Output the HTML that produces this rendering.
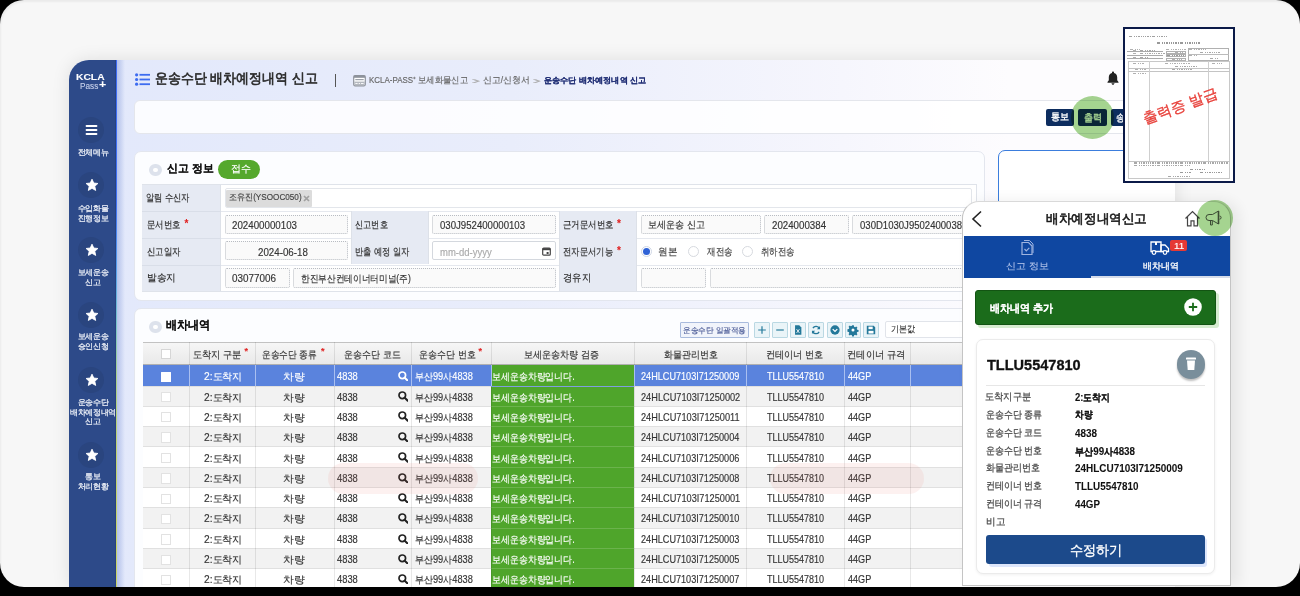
<!DOCTYPE html><html><head><meta charset="utf-8"><style>
*{box-sizing:border-box;margin:0;padding:0}
html,body{width:1300px;height:596px;overflow:hidden;background:#000;font-family:"Liberation Sans",sans-serif;}
.abs{position:absolute}
.t{position:absolute;white-space:nowrap;line-height:1}
#frame{position:absolute;left:0;top:0;width:1300px;height:587px;background:#f7f7f7;border-radius:24px;overflow:hidden;box-shadow:inset 1px 2px 2px rgba(0,0,0,.05)}
#win{position:absolute;left:69px;top:60px;width:1106px;height:527px;border-top-left-radius:20px;overflow:hidden;
 background:linear-gradient(90deg,#e2e8fb 0%,#e9edfb 40%,#f6f6fd 70%,#fdfcfe 85%);box-shadow:0 0 18px rgba(0,0,0,.10)}
#side{position:absolute;left:0;top:0;width:48px;height:527px;background:#2d4a89}
#sline{position:absolute;left:46.5px;top:0;width:1.5px;height:527px;background:linear-gradient(180deg,#3d6cf4 0%,#3f72f4 27%,#58a2ee 40%,#78c6cc 50%,#a9d28a 60%,#c2d46c 75%,#cad464 100%)}
#sdark{position:absolute;left:45.5px;top:0;width:1px;height:527px;background:#27427f}
#sideshadow{position:absolute;left:48px;top:0;width:8px;height:527px;background:linear-gradient(90deg,#b4c2ea,rgba(226,232,251,0))}
.sc{position:absolute;width:26px;height:26px;border-radius:50%;background:#2a457f}
.sl{position:absolute;left:0;width:48px;text-align:center;color:#f2f5fb;font-size:8px;line-height:9.6px;white-space:nowrap;letter-spacing:-0.3px;-webkit-text-stroke:0.2px #f2f5fb}
</style></head><body>
<div id="frame">
<div id="win">
<div id="sideshadow"></div>
<div id="side">
<div class="sc" style="left:9px;top:57px"></div>
<svg class="abs" style="left:16px;top:64px" width="13" height="12" viewBox="0 0 13 12"><path d="M1.5 2h10M1.5 6h10M1.5 10h10" stroke="#fff" stroke-width="1.8" stroke-linecap="round"/></svg>
<div class="sl" style="top:88px">전체메뉴</div>
<div class="sc" style="left:9px;top:112px"></div>
<svg class="abs" style="left:16px;top:118px" width="14" height="14" viewBox="0 0 24 24"><path fill="#fff" stroke="#fff" stroke-width="1.5" stroke-linejoin="round" d="M12 2l3 6.6 7.1.8-5.3 4.8 1.5 7.1L12 17.7l-6.3 3.6 1.5-7.1-5.3-4.8 7.1-.8z"/></svg>
<div class="sl" style="top:144px">수입화물<br>진행정보</div>
<div class="sc" style="left:9px;top:177px"></div>
<svg class="abs" style="left:16px;top:183px" width="14" height="14" viewBox="0 0 24 24"><path fill="#fff" stroke="#fff" stroke-width="1.5" stroke-linejoin="round" d="M12 2l3 6.6 7.1.8-5.3 4.8 1.5 7.1L12 17.7l-6.3 3.6 1.5-7.1-5.3-4.8 7.1-.8z"/></svg>
<div class="sl" style="top:208px">보세운송<br>신고</div>
<div class="sc" style="left:9px;top:242px"></div>
<svg class="abs" style="left:16px;top:248px" width="14" height="14" viewBox="0 0 24 24"><path fill="#fff" stroke="#fff" stroke-width="1.5" stroke-linejoin="round" d="M12 2l3 6.6 7.1.8-5.3 4.8 1.5 7.1L12 17.7l-6.3 3.6 1.5-7.1-5.3-4.8 7.1-.8z"/></svg>
<div class="sl" style="top:272px">보세운송<br>승인신청</div>
<div class="sc" style="left:9px;top:307px"></div>
<svg class="abs" style="left:16px;top:313px" width="14" height="14" viewBox="0 0 24 24"><path fill="#fff" stroke="#fff" stroke-width="1.5" stroke-linejoin="round" d="M12 2l3 6.6 7.1.8-5.3 4.8 1.5 7.1L12 17.7l-6.3 3.6 1.5-7.1-5.3-4.8 7.1-.8z"/></svg>
<div class="sl" style="top:338px">운송수단<br>배차예정내역<br>신고</div>
<div class="sc" style="left:9px;top:382px"></div>
<svg class="abs" style="left:16px;top:388px" width="14" height="14" viewBox="0 0 24 24"><path fill="#fff" stroke="#fff" stroke-width="1.5" stroke-linejoin="round" d="M12 2l3 6.6 7.1.8-5.3 4.8 1.5 7.1L12 17.7l-6.3 3.6 1.5-7.1-5.3-4.8 7.1-.8z"/></svg>
<div class="sl" style="top:412px">통보<br>처리현황</div>
<div class="t" style="left:7.10px;top:13.35px;font-size:8.58px;font-weight:bold;color:#fff;transform:scaleX(1.2000);transform-origin:0 0;-webkit-text-stroke:0.08px currentColor">KCLA</div>
<div class="t" style="left:11.39px;top:21.80px;font-size:9.00px;color:#c3cde8;transform:scaleX(0.9111);transform-origin:0 0;-webkit-text-stroke:0.15px currentColor">Pass</div>
<div class="t" style="left:30.30px;top:19.73px;font-size:10.29px;font-weight:bold;color:#fff;transform:scaleX(1.2000);transform-origin:0 0;-webkit-text-stroke:0.08px currentColor">+</div>
<div id="sdark"></div><div id="sline"></div>
</div>
<svg class="abs" style="left:66.00px;top:13.00px" width="15" height="13" viewBox="0 0 15 13"><g fill="#3d6cf0"><circle cx="1.6" cy="1.8" r="1.6"/><circle cx="1.6" cy="6.5" r="1.6"/><circle cx="1.6" cy="11.2" r="1.6"/><rect x="4.5" y="0.9" width="10.5" height="1.8"/><rect x="4.5" y="5.6" width="10.5" height="1.8"/><rect x="4.5" y="10.3" width="10.5" height="1.8"/></g></svg>
<div class="t" style="left:86.37px;top:11.77px;font-size:13.73px;color:#2a2a2a;-webkit-text-stroke:0.65px #2a2a2a;transform:scaleX(0.9254);transform-origin:0 0">운송수단 배차예정내역 신고</div>
<div class="abs" style="left:266.00px;top:14.00px;width:1.00px;height:13.00px;background:#555"></div>
<svg class="abs" style="left:284.00px;top:15.00px" width="13" height="11.5" viewBox="0 0 13 11.5"><rect x="0.7" y="0.7" width="11.6" height="10.1" rx="1.2" fill="#fff" stroke="#8d929b" stroke-width="1.2"/><rect x="1" y="1" width="11" height="1.8" fill="#8d929b"/><rect x="2.3" y="4" width="8.4" height="1.2" fill="#9ca1a9"/><rect x="1.3" y="6.6" width="10.4" height="3.6" fill="#b4b8bf"/><path d="M2.4 8.5h2.2M5.7 8.5h1.4M8 8.5h2.6" stroke="#fff" stroke-width="0.9"/></svg>
<div class="t" style="left:300.37px;top:16.12px;font-size:8.58px;color:#666;transform:scaleX(0.9269);transform-origin:0 0;-webkit-text-stroke:0.15px currentColor">KCLA-PASS⁺ 보세화물신고</div>
<div class="t" style="left:402.20px;top:15.74px;font-size:9.50px;color:#aaa;transform:scaleX(3.1000);transform-origin:0 0;-webkit-text-stroke:0.15px currentColor">›</div>
<div class="t" style="left:413.53px;top:15.62px;font-size:8.58px;color:#666;transform:scaleX(0.9860);transform-origin:0 0;-webkit-text-stroke:0.15px currentColor">신고/신청서</div>
<div class="t" style="left:462.90px;top:15.74px;font-size:9.50px;color:#aaa;transform:scaleX(3.0000);transform-origin:0 0;-webkit-text-stroke:0.15px currentColor">›</div>
<div class="t" style="left:474.58px;top:16.14px;font-size:8.36px;font-weight:bold;color:#1f2d74;transform:scaleX(1.0173);transform-origin:0 0;-webkit-text-stroke:0.08px currentColor">운송수단 배차예정내역 신고</div>
<svg class="abs" style="left:1038.00px;top:11.00px" width="12" height="14" viewBox="0 0 12 14"><path fill="#222" d="M6 0.5c.6 0 1 .4 1 1v.5c2 .5 3.2 2.2 3.2 4.3v3l1.3 1.7v.7H.5v-.7l1.3-1.7v-3C1.8 4.2 3 2.5 5 2v-.5c0-.6.4-1 1-1zM4.5 12.2h3c0 .9-.7 1.5-1.5 1.5s-1.5-.6-1.5-1.5z"/></svg>
<div class="abs" style="left:65.00px;top:39.50px;width:1066.00px;height:34.00px;background:rgba(255,255,255,.85);border:1px solid #e4e6ec;border-radius:6px"></div>
<div class="abs" style="left:977.00px;top:48.50px;width:28.00px;height:17.00px;background:#0d2d5f;border-radius:2px"></div>
<div class="t" style="left:982.39px;top:52.28px;font-size:9.72px;color:#fff;-webkit-text-stroke:0.35px #fff;transform:scaleX(0.9059);transform-origin:0 0">통보</div>
<div class="abs" style="left:1009.00px;top:48.50px;width:29.00px;height:17.00px;background:#0d2d5f;border-radius:2px"></div>
<div class="t" style="left:1014.89px;top:52.54px;font-size:9.66px;color:#fff;-webkit-text-stroke:0.35px #fff;transform:scaleX(0.9059);transform-origin:0 0">출력</div>
<div class="abs" style="left:1041.50px;top:48.50px;width:29.50px;height:17.00px;background:#0d2d5f;border-radius:2px"></div>
<div class="t" style="left:1046.89px;top:52.54px;font-size:9.66px;color:#fff;-webkit-text-stroke:0.35px #fff;transform:scaleX(0.9059);transform-origin:0 0">송신</div>
<div class="abs" style="left:1002.00px;top:35.50px;width:43.00px;height:43.00px;background:#a5d490;border-radius:50%;mix-blend-mode:multiply"></div>
<div class="abs" style="left:64.50px;top:90.50px;width:851.50px;height:150.50px;background:#fcfdff;border:1px solid #e3e6ee;border-radius:7px"></div>
<div class="abs" style="left:80.0px;top:103.5px;width:12.5px;height:12.5px;border-radius:50%;border:4px solid #dde2ec;background:#fff"></div>
<div class="t" style="left:97.51px;top:102.79px;font-size:11.41px;font-weight:bold;color:#111;transform:scaleX(0.9909);transform-origin:0 0;-webkit-text-stroke:0.08px currentColor">신고 정보</div>
<div class="abs" style="left:149.00px;top:99.50px;width:42.20px;height:19.00px;background:#55a82c;border-radius:10px"></div>
<div class="t" style="left:161.50px;top:104.00px;font-size:10px;color:#fff;-webkit-text-stroke:0.15px currentColor">접수</div>
<div class="abs" style="left:73.00px;top:124.00px;width:834.50px;height:107.50px;background:#fff;border:1px solid #dfe3ea;border-left:none"></div>
<div class="abs" style="left:73.00px;top:150.80px;width:833.00px;height:1.00px;background:#e5e8ee"></div>
<div class="abs" style="left:73.00px;top:177.50px;width:833.00px;height:1.00px;background:#e5e8ee"></div>
<div class="abs" style="left:73.00px;top:204.50px;width:833.00px;height:1.00px;background:#e5e8ee"></div>
<div class="abs" style="left:73.00px;top:124.50px;width:79.00px;height:106.50px;background:#e6eaf3;border-right:1px solid #dde1e8"></div>
<div class="abs" style="left:282.00px;top:150.80px;width:78.00px;height:53.70px;background:#e6eaf3;border-left:1px solid #dde1e8;border-right:1px solid #dde1e8"></div>
<div class="abs" style="left:490.00px;top:150.80px;width:78.00px;height:80.20px;background:#e6eaf3;border-left:1px solid #dde1e8;border-right:1px solid #dde1e8"></div>
<div class="abs" style="left:73.00px;top:150.80px;width:79.00px;height:1.00px;background:#d9dee8"></div>
<div class="abs" style="left:73.00px;top:177.50px;width:79.00px;height:1.00px;background:#d9dee8"></div>
<div class="abs" style="left:73.00px;top:204.50px;width:79.00px;height:1.00px;background:#d9dee8"></div>
<div class="t" style="left:77.27px;top:132.90px;font-size:9.60px;color:#2a2a2a;transform:scaleX(0.8300);transform-origin:0 0;-webkit-text-stroke:0.15px currentColor">알림 수신자</div>
<div class="t" style="left:77.66px;top:159.90px;font-size:9.60px;color:#2a2a2a;transform:scaleX(0.8432);transform-origin:0 0;-webkit-text-stroke:0.15px currentColor">문서번호</div>
<div class="t" style="left:115.50px;top:158.50px;font-size:10px;color:#e02020;font-weight:bold;-webkit-text-stroke:0.08px currentColor">*</div>
<div class="t" style="left:77.66px;top:186.90px;font-size:9.60px;color:#2a2a2a;transform:scaleX(0.8432);transform-origin:0 0;-webkit-text-stroke:0.15px currentColor">신고일자</div>
<div class="t" style="left:77.53px;top:213.30px;font-size:9.60px;color:#2a2a2a;transform:scaleX(0.9667);transform-origin:0 0;-webkit-text-stroke:0.15px currentColor">발송지</div>
<div class="t" style="left:286.48px;top:159.90px;font-size:9.60px;color:#2a2a2a;transform:scaleX(0.8216);transform-origin:0 0;-webkit-text-stroke:0.15px currentColor">신고번호</div>
<div class="t" style="left:286.47px;top:186.90px;font-size:9.60px;color:#2a2a2a;transform:scaleX(0.8290);transform-origin:0 0;-webkit-text-stroke:0.15px currentColor">반출 예정 일자</div>
<div class="t" style="left:493.96px;top:159.90px;font-size:9.60px;color:#2a2a2a;transform:scaleX(0.8404);transform-origin:0 0;-webkit-text-stroke:0.15px currentColor">근거문서번호</div>
<div class="t" style="left:548.00px;top:158.50px;font-size:10px;color:#e02020;font-weight:bold;-webkit-text-stroke:0.08px currentColor">*</div>
<div class="t" style="left:493.97px;top:186.90px;font-size:9.60px;color:#2a2a2a;transform:scaleX(0.8333);transform-origin:0 0;-webkit-text-stroke:0.15px currentColor">전자문서기능</div>
<div class="t" style="left:548.00px;top:185.50px;font-size:10px;color:#e02020;font-weight:bold;-webkit-text-stroke:0.08px currentColor">*</div>
<div class="t" style="left:493.87px;top:213.30px;font-size:9.60px;color:#2a2a2a;transform:scaleX(0.9333);transform-origin:0 0;-webkit-text-stroke:0.15px currentColor">경유지</div>
<div class="abs" style="left:155.50px;top:128.00px;width:747.50px;height:20.00px;background:#fff;border:1px solid #e3e6eb;border-radius:2px"></div>
<div class="abs" style="left:157.00px;top:130.30px;width:85.50px;height:16.70px;background:#dcdcdc;border-radius:1px"></div>
<div class="t" style="left:159.61px;top:133.08px;font-size:9.14px;color:#444;transform:scaleX(0.8937);transform-origin:0 0;-webkit-text-stroke:0.15px currentColor">조유진(YSOOC050)</div>
<svg class="abs" style="left:233.50px;top:135.00px" width="7" height="7" viewBox="0 0 7 7"><path d="M1 1l5 5M6 1L1 6" stroke="#a0a0a0" stroke-width="1.7"/></svg>
<div class="abs" style="left:155.50px;top:154.60px;width:123.00px;height:19.00px;background:#fafafa;border:1px dotted #b8bcc2;border-radius:2px"></div>
<div class="t" style="left:162.83px;top:160.80px;font-size:10.00px;color:#333;transform:scaleX(0.9734);transform-origin:0 0;-webkit-text-stroke:0.15px currentColor">202400000103</div>
<div class="abs" style="left:363.00px;top:154.60px;width:124.00px;height:19.00px;background:#fafafa;border:1px dotted #b8bcc2;border-radius:2px"></div>
<div class="t" style="left:371.34px;top:160.80px;font-size:10.00px;color:#333;transform:scaleX(0.9616);transform-origin:0 0;-webkit-text-stroke:0.15px currentColor">030J952400000103</div>
<div class="abs" style="left:571.50px;top:154.60px;width:120.00px;height:19.00px;background:#fafafa;border:1px dotted #b8bcc2;border-radius:2px"></div>
<div class="t" style="left:578.69px;top:159.80px;font-size:10.00px;color:#333;transform:scaleX(0.9052);transform-origin:0 0;-webkit-text-stroke:0.15px currentColor">보세운송 신고</div>
<div class="abs" style="left:695.00px;top:154.60px;width:84.50px;height:19.00px;background:#fafafa;border:1px dotted #b8bcc2;border-radius:2px"></div>
<div class="t" style="left:703.03px;top:160.80px;font-size:10.00px;color:#333;transform:scaleX(0.9717);transform-origin:0 0;-webkit-text-stroke:0.15px currentColor">2024000384</div>
<div class="abs" style="left:783.00px;top:154.60px;width:148.00px;height:19.00px;background:#fafafa;border:1px dotted #b8bcc2;border-radius:2px"></div>
<div class="t" style="left:790.64px;top:160.80px;font-size:10.00px;color:#333;transform:scaleX(0.9555);transform-origin:0 0;-webkit-text-stroke:0.15px currentColor">030D1030J95024000384</div>
<div class="abs" style="left:155.50px;top:181.20px;width:123.00px;height:19.00px;background:#fafafa;border:1px dotted #b8bcc2;border-radius:2px"></div>
<div class="t" style="left:189.33px;top:187.60px;font-size:10.00px;color:#333;transform:scaleX(0.9735);transform-origin:0 0;-webkit-text-stroke:0.15px currentColor">2024-06-18</div>
<div class="abs" style="left:363.00px;top:181.20px;width:124.00px;height:19.00px;background:#fff;border:1px solid #d4d8de;border-radius:2px"></div>
<div class="t" style="left:371.35px;top:187.60px;font-size:10.00px;color:#aaa;transform:scaleX(0.9500);transform-origin:0 0;-webkit-text-stroke:0.15px currentColor">mm-dd-yyyy</div>
<svg class="abs" style="left:473.00px;top:187.00px" width="9" height="9" viewBox="0 0 9 9"><rect x="0.7" y="1.2" width="7.6" height="7" rx="1" fill="none" stroke="#444" stroke-width="1.2"/><rect x="0.7" y="1.2" width="7.6" height="2" fill="#444"/><rect x="4.6" y="5" width="2" height="2" fill="#444"/></svg>
<div class="abs" style="left:571.5px;top:186.0px;width:11px;height:11px;border-radius:50%;background:#fff;border:1px solid #cfd6e4"><div style="position:absolute;left:1px;top:1px;width:7px;height:7px;border-radius:50%;background:#2f62d6"></div></div>
<div class="t" style="left:589.38px;top:186.90px;font-size:9.60px;color:#444;transform:scaleX(0.9625);transform-origin:0 0;-webkit-text-stroke:0.15px currentColor">원본</div>
<div class="abs" style="left:618.5px;top:186.0px;width:11px;height:11px;border-radius:50%;background:#fff;border:1px solid #d6d9de"></div>
<div class="t" style="left:637.85px;top:186.90px;font-size:9.60px;color:#444;transform:scaleX(0.8519);transform-origin:0 0;-webkit-text-stroke:0.15px currentColor">재전송</div>
<div class="abs" style="left:673.0px;top:186.0px;width:11px;height:11px;border-radius:50%;background:#fff;border:1px solid #d6d9de"></div>
<div class="t" style="left:692.11px;top:186.90px;font-size:9.60px;color:#444;transform:scaleX(0.8472);transform-origin:0 0;-webkit-text-stroke:0.15px currentColor">취하전송</div>
<div class="abs" style="left:155.50px;top:208.20px;width:65.50px;height:19.40px;background:#fafafa;border:1px dotted #b8bcc2;border-radius:2px"></div>
<div class="t" style="left:162.81px;top:214.40px;font-size:10.00px;color:#333;transform:scaleX(0.9881);transform-origin:0 0;-webkit-text-stroke:0.15px currentColor">03077006</div>
<div class="abs" style="left:224.00px;top:208.20px;width:263.00px;height:19.40px;background:#fafafa;border:1px dotted #b8bcc2;border-radius:2px"></div>
<div class="t" style="left:231.83px;top:213.50px;font-size:10.00px;color:#333;transform:scaleX(0.8669);transform-origin:0 0;-webkit-text-stroke:0.15px currentColor">한진부산컨테이너터미널(주)</div>
<div class="abs" style="left:571.50px;top:208.20px;width:65.00px;height:19.40px;background:#fafafa;border:1px dotted #b8bcc2;border-radius:2px"></div>
<div class="abs" style="left:640.50px;top:208.20px;width:290.50px;height:19.40px;background:#fafafa;border:1px dotted #b8bcc2;border-radius:2px"></div>
<div class="abs" style="left:929.00px;top:90.00px;width:202.00px;height:110.00px;background:#fff;border:1px solid #3b7ddd;border-radius:7px"></div>
<div class="abs" style="left:64.50px;top:247.50px;width:851.50px;height:312.50px;background:#fcfdff;border:1px solid #e3e6ee;border-radius:7px"></div>
<div class="abs" style="left:80.0px;top:260.5px;width:12.5px;height:12.5px;border-radius:50%;border:4px solid #dde2ec;background:#fff"></div>
<div class="t" style="left:97.37px;top:260.18px;font-size:11.52px;font-weight:bold;color:#111;transform:scaleX(0.9273);transform-origin:0 0;-webkit-text-stroke:0.08px currentColor">배차내역</div>
<div class="abs" style="left:610.50px;top:262.00px;width:69.50px;height:16.00px;background:#f1f4fb;border:1px solid #a9bbdd;border-radius:1px"></div>
<div class="t" style="left:614.35px;top:265.86px;font-size:8.34px;color:#4a5a96;transform:scaleX(0.9508);transform-origin:0 0;-webkit-text-stroke:0.15px currentColor">운송수단 일괄적용</div>
<div class="abs" style="left:685.00px;top:261.50px;width:16.00px;height:16.00px;background:#eaf4f8;border:1px solid #bad8e3;border-radius:1px"></div>
<div class="abs" style="left:703.00px;top:261.50px;width:16.00px;height:16.00px;background:#eaf4f8;border:1px solid #bad8e3;border-radius:1px"></div>
<div class="abs" style="left:721.00px;top:261.50px;width:16.00px;height:16.00px;background:#eaf4f8;border:1px solid #bad8e3;border-radius:1px"></div>
<div class="abs" style="left:739.00px;top:261.50px;width:16.00px;height:16.00px;background:#eaf4f8;border:1px solid #bad8e3;border-radius:1px"></div>
<div class="abs" style="left:757.50px;top:261.50px;width:16.00px;height:16.00px;background:#eaf4f8;border:1px solid #bad8e3;border-radius:1px"></div>
<div class="abs" style="left:776.00px;top:261.50px;width:16.00px;height:16.00px;background:#eaf4f8;border:1px solid #bad8e3;border-radius:1px"></div>
<div class="abs" style="left:794.00px;top:261.50px;width:16.00px;height:16.00px;background:#eaf4f8;border:1px solid #bad8e3;border-radius:1px"></div>
<svg class="abs" style="left:685.00px;top:261.50px" width="16" height="16" viewBox="-1.5 -1.5 19 19"><path d="M8 3.5v9M3.5 8h9" stroke="#23789a" stroke-width="1.4"/></svg>
<svg class="abs" style="left:703.00px;top:261.50px" width="16" height="16" viewBox="-1.5 -1.5 19 19"><path d="M3.5 8h9" stroke="#23789a" stroke-width="1.4"/></svg>
<svg class="abs" style="left:721.00px;top:261.50px" width="16" height="16" viewBox="-1.5 -1.5 19 19"><path d="M4.5 2.5h5l2.5 2.5v8.5h-7.5z" fill="#23789a"/><path d="M6.3 7l3.4 4.5M9.7 7l-3.4 4.5" stroke="#fff" stroke-width="1"/></svg>
<svg class="abs" style="left:739.00px;top:261.50px" width="16" height="16" viewBox="-1.5 -1.5 19 19"><path d="M12 6.5A4.2 4.2 0 0 0 4.3 5.8M4 9.5a4.2 4.2 0 0 0 7.7.7" fill="none" stroke="#23789a" stroke-width="1.5"/><path d="M12.8 3.2v3.8H9z M3.2 12.8V9H7z" fill="#23789a"/></svg>
<svg class="abs" style="left:757.50px;top:261.50px" width="16" height="16" viewBox="-1.5 -1.5 19 19"><circle cx="8" cy="8" r="5.5" fill="#23789a"/><path d="M5.3 7l2.7 2.7L10.7 7" fill="none" stroke="#fff" stroke-width="1.5"/></svg>
<svg class="abs" style="left:776.00px;top:261.50px" width="16" height="16" viewBox="-1.5 -1.5 19 19"><path fill="#23789a" d="M7 2.5h2l.3 1.6 1.2.6 1.4-.9 1.4 1.4-.9 1.4.6 1.2 1.6.3v2l-1.6.3-.6 1.2.9 1.4-1.4 1.4-1.4-.9-1.2.6-.3 1.6H7l-.3-1.6-1.2-.6-1.4.9-1.4-1.4.9-1.4-.6-1.2-1.6-.3V7l1.6-.3.6-1.2-.9-1.4 1.4-1.4 1.4.9 1.2-.6z"/><circle cx="8" cy="8" r="1.8" fill="#fff"/></svg>
<svg class="abs" style="left:794.00px;top:261.50px" width="16" height="16" viewBox="-1.5 -1.5 19 19"><path fill="#23789a" d="M3 3h8.2L13 4.8V13H3z"/><rect x="5" y="4" width="5" height="3" fill="#fff"/><rect x="5" y="9" width="6" height="3.2" fill="#fff"/></svg>
<div class="abs" style="left:815.50px;top:261.00px;width:115.50px;height:17.00px;background:#fff;border:1px solid #e1e4ea;border-radius:2px"></div>
<div class="t" style="left:822.40px;top:265.08px;font-size:9.12px;color:#333;transform:scaleX(0.8960);transform-origin:0 0;-webkit-text-stroke:0.15px currentColor">기본값</div>
<div class="abs" style="left:73.50px;top:282.00px;width:857.50px;height:23.00px;background:linear-gradient(#f6f6f6,#e9e9e9);border-top:1px solid #c2c2c2;border-bottom:1px solid #b0b0b0"></div>
<div class="abs" style="left:73.50px;top:305.00px;width:857.50px;height:20.80px;background:#5a83dd;border-top:1px solid #5a83dd"></div>
<div class="abs" style="left:421.50px;top:305.00px;width:143.50px;height:20.80px;background:#4fa52b;border-top:1px solid #4fa52b"></div>
<div class="abs" style="left:91.50px;top:311.60px;width:10.50px;height:10.20px;background:#fff;border:1px solid #fff;border-radius:0.5px"></div>
<div class="t" style="left:134.91px;top:312.20px;font-size:10.30px;color:#fff;transform:scaleX(0.9939);transform-origin:0 0;-webkit-text-stroke:0.15px currentColor">2:도착지</div>
<div class="t" style="left:213.94px;top:312.20px;font-size:10.30px;color:#fff;transform:scaleX(1.0812);transform-origin:0 0;-webkit-text-stroke:0.15px currentColor">차량</div>
<div class="t" style="left:268.00px;top:312.20px;font-size:10.30px;color:#fff;transform:scaleX(0.9091);transform-origin:0 0;-webkit-text-stroke:0.15px currentColor">4838</div>
<svg class="abs" style="left:328.80px;top:310.80px" width="10.5" height="10.5" viewBox="0 0 10.5 10.5"><circle cx="4.3" cy="4.3" r="3.3" fill="none" stroke="#fff" stroke-width="1.7"/><path d="M6.7 6.7l3 3" stroke="#fff" stroke-width="2" stroke-linecap="round"/></svg>
<div class="t" style="left:345.50px;top:312.20px;font-size:10.30px;color:#fff;transform:scaleX(0.8984);transform-origin:0 0;-webkit-text-stroke:0.15px currentColor">부산99사4838</div>
<div class="t" style="left:423.42px;top:312.20px;font-size:10.30px;color:#fff;transform:scaleX(0.8910);transform-origin:0 0;-webkit-text-stroke:0.15px currentColor">보세운송차량입니다.</div>
<div class="t" style="left:571.91px;top:312.20px;font-size:10.30px;color:#fff;transform:scaleX(0.8853);transform-origin:0 0;-webkit-text-stroke:0.15px currentColor">24HLCU7103I71250009</div>
<div class="t" style="left:698.00px;top:312.20px;font-size:10.30px;color:#fff;transform:scaleX(0.8734);transform-origin:0 0;-webkit-text-stroke:0.15px currentColor">TLLU5547810</div>
<div class="t" style="left:778.60px;top:312.20px;font-size:10.30px;color:#fff;transform:scaleX(0.8840);transform-origin:0 0;-webkit-text-stroke:0.15px currentColor">44GP</div>
<div class="abs" style="left:73.50px;top:325.80px;width:857.50px;height:20.10px;background:#f2f2f2;border-top:1px solid #e0e0e0"></div>
<div class="abs" style="left:421.50px;top:325.80px;width:143.50px;height:20.10px;background:#4fa52b;border-top:1px solid #7f9fe0"></div>
<div class="abs" style="left:91.50px;top:332.05px;width:10.50px;height:10.20px;background:#fff;border:1px solid #e2e2e2;border-radius:0.5px"></div>
<div class="t" style="left:134.91px;top:332.65px;font-size:10.30px;color:#333;transform:scaleX(0.9939);transform-origin:0 0;-webkit-text-stroke:0.15px currentColor">2:도착지</div>
<div class="t" style="left:213.94px;top:332.65px;font-size:10.30px;color:#333;transform:scaleX(1.0812);transform-origin:0 0;-webkit-text-stroke:0.15px currentColor">차량</div>
<div class="t" style="left:268.00px;top:332.65px;font-size:10.30px;color:#333;transform:scaleX(0.9091);transform-origin:0 0;-webkit-text-stroke:0.15px currentColor">4838</div>
<svg class="abs" style="left:328.80px;top:331.25px" width="10.5" height="10.5" viewBox="0 0 10.5 10.5"><circle cx="4.3" cy="4.3" r="3.3" fill="none" stroke="#222" stroke-width="1.7"/><path d="M6.7 6.7l3 3" stroke="#222" stroke-width="2" stroke-linecap="round"/></svg>
<div class="t" style="left:345.50px;top:332.65px;font-size:10.30px;color:#333;transform:scaleX(0.8984);transform-origin:0 0;-webkit-text-stroke:0.15px currentColor">부산99사4838</div>
<div class="t" style="left:423.42px;top:332.65px;font-size:10.30px;color:#fff;transform:scaleX(0.8910);transform-origin:0 0;-webkit-text-stroke:0.15px currentColor">보세운송차량입니다.</div>
<div class="t" style="left:571.91px;top:332.65px;font-size:10.30px;color:#333;transform:scaleX(0.8935);transform-origin:0 0;-webkit-text-stroke:0.15px currentColor">24HLCU7103I71250002</div>
<div class="t" style="left:698.00px;top:332.65px;font-size:10.30px;color:#333;transform:scaleX(0.8734);transform-origin:0 0;-webkit-text-stroke:0.15px currentColor">TLLU5547810</div>
<div class="t" style="left:778.60px;top:332.65px;font-size:10.30px;color:#333;transform:scaleX(0.8840);transform-origin:0 0;-webkit-text-stroke:0.15px currentColor">44GP</div>
<div class="abs" style="left:73.50px;top:345.90px;width:857.50px;height:20.20px;background:#ffffff;border-top:1px solid #e0e0e0"></div>
<div class="abs" style="left:421.50px;top:345.90px;width:143.50px;height:20.20px;background:#4fa52b;border-top:1px solid #6bb34c"></div>
<div class="abs" style="left:91.50px;top:352.20px;width:10.50px;height:10.20px;background:#fff;border:1px solid #e2e2e2;border-radius:0.5px"></div>
<div class="t" style="left:134.91px;top:352.80px;font-size:10.30px;color:#333;transform:scaleX(0.9939);transform-origin:0 0;-webkit-text-stroke:0.15px currentColor">2:도착지</div>
<div class="t" style="left:213.94px;top:352.80px;font-size:10.30px;color:#333;transform:scaleX(1.0812);transform-origin:0 0;-webkit-text-stroke:0.15px currentColor">차량</div>
<div class="t" style="left:268.00px;top:352.80px;font-size:10.30px;color:#333;transform:scaleX(0.9091);transform-origin:0 0;-webkit-text-stroke:0.15px currentColor">4838</div>
<svg class="abs" style="left:328.80px;top:351.40px" width="10.5" height="10.5" viewBox="0 0 10.5 10.5"><circle cx="4.3" cy="4.3" r="3.3" fill="none" stroke="#222" stroke-width="1.7"/><path d="M6.7 6.7l3 3" stroke="#222" stroke-width="2" stroke-linecap="round"/></svg>
<div class="t" style="left:345.50px;top:352.80px;font-size:10.30px;color:#333;transform:scaleX(0.8984);transform-origin:0 0;-webkit-text-stroke:0.15px currentColor">부산99사4838</div>
<div class="t" style="left:423.42px;top:352.80px;font-size:10.30px;color:#fff;transform:scaleX(0.8910);transform-origin:0 0;-webkit-text-stroke:0.15px currentColor">보세운송차량입니다.</div>
<div class="t" style="left:571.91px;top:352.80px;font-size:10.30px;color:#333;transform:scaleX(0.8935);transform-origin:0 0;-webkit-text-stroke:0.15px currentColor">24HLCU7103I71250011</div>
<div class="t" style="left:698.00px;top:352.80px;font-size:10.30px;color:#333;transform:scaleX(0.8734);transform-origin:0 0;-webkit-text-stroke:0.15px currentColor">TLLU5547810</div>
<div class="t" style="left:778.60px;top:352.80px;font-size:10.30px;color:#333;transform:scaleX(0.8840);transform-origin:0 0;-webkit-text-stroke:0.15px currentColor">44GP</div>
<div class="abs" style="left:73.50px;top:366.10px;width:857.50px;height:20.30px;background:#f2f2f2;border-top:1px solid #e0e0e0"></div>
<div class="abs" style="left:421.50px;top:366.10px;width:143.50px;height:20.30px;background:#4fa52b;border-top:1px solid #6bb34c"></div>
<div class="abs" style="left:91.50px;top:372.45px;width:10.50px;height:10.20px;background:#fff;border:1px solid #e2e2e2;border-radius:0.5px"></div>
<div class="t" style="left:134.91px;top:373.05px;font-size:10.30px;color:#333;transform:scaleX(0.9939);transform-origin:0 0;-webkit-text-stroke:0.15px currentColor">2:도착지</div>
<div class="t" style="left:213.94px;top:373.05px;font-size:10.30px;color:#333;transform:scaleX(1.0812);transform-origin:0 0;-webkit-text-stroke:0.15px currentColor">차량</div>
<div class="t" style="left:268.00px;top:373.05px;font-size:10.30px;color:#333;transform:scaleX(0.9091);transform-origin:0 0;-webkit-text-stroke:0.15px currentColor">4838</div>
<svg class="abs" style="left:328.80px;top:371.65px" width="10.5" height="10.5" viewBox="0 0 10.5 10.5"><circle cx="4.3" cy="4.3" r="3.3" fill="none" stroke="#222" stroke-width="1.7"/><path d="M6.7 6.7l3 3" stroke="#222" stroke-width="2" stroke-linecap="round"/></svg>
<div class="t" style="left:345.50px;top:373.05px;font-size:10.30px;color:#333;transform:scaleX(0.8984);transform-origin:0 0;-webkit-text-stroke:0.15px currentColor">부산99사4838</div>
<div class="t" style="left:423.42px;top:373.05px;font-size:10.30px;color:#fff;transform:scaleX(0.8910);transform-origin:0 0;-webkit-text-stroke:0.15px currentColor">보세운송차량입니다.</div>
<div class="t" style="left:571.91px;top:373.05px;font-size:10.30px;color:#333;transform:scaleX(0.8853);transform-origin:0 0;-webkit-text-stroke:0.15px currentColor">24HLCU7103I71250004</div>
<div class="t" style="left:698.00px;top:373.05px;font-size:10.30px;color:#333;transform:scaleX(0.8734);transform-origin:0 0;-webkit-text-stroke:0.15px currentColor">TLLU5547810</div>
<div class="t" style="left:778.60px;top:373.05px;font-size:10.30px;color:#333;transform:scaleX(0.8840);transform-origin:0 0;-webkit-text-stroke:0.15px currentColor">44GP</div>
<div class="abs" style="left:73.50px;top:386.40px;width:857.50px;height:20.60px;background:#ffffff;border-top:1px solid #e0e0e0"></div>
<div class="abs" style="left:421.50px;top:386.40px;width:143.50px;height:20.60px;background:#4fa52b;border-top:1px solid #6bb34c"></div>
<div class="abs" style="left:91.50px;top:392.90px;width:10.50px;height:10.20px;background:#fff;border:1px solid #e2e2e2;border-radius:0.5px"></div>
<div class="t" style="left:134.91px;top:393.50px;font-size:10.30px;color:#333;transform:scaleX(0.9939);transform-origin:0 0;-webkit-text-stroke:0.15px currentColor">2:도착지</div>
<div class="t" style="left:213.94px;top:393.50px;font-size:10.30px;color:#333;transform:scaleX(1.0812);transform-origin:0 0;-webkit-text-stroke:0.15px currentColor">차량</div>
<div class="t" style="left:268.00px;top:393.50px;font-size:10.30px;color:#333;transform:scaleX(0.9091);transform-origin:0 0;-webkit-text-stroke:0.15px currentColor">4838</div>
<svg class="abs" style="left:328.80px;top:392.10px" width="10.5" height="10.5" viewBox="0 0 10.5 10.5"><circle cx="4.3" cy="4.3" r="3.3" fill="none" stroke="#222" stroke-width="1.7"/><path d="M6.7 6.7l3 3" stroke="#222" stroke-width="2" stroke-linecap="round"/></svg>
<div class="t" style="left:345.50px;top:393.50px;font-size:10.30px;color:#333;transform:scaleX(0.8984);transform-origin:0 0;-webkit-text-stroke:0.15px currentColor">부산99사4838</div>
<div class="t" style="left:423.42px;top:393.50px;font-size:10.30px;color:#fff;transform:scaleX(0.8910);transform-origin:0 0;-webkit-text-stroke:0.15px currentColor">보세운송차량입니다.</div>
<div class="t" style="left:571.91px;top:393.50px;font-size:10.30px;color:#333;transform:scaleX(0.8853);transform-origin:0 0;-webkit-text-stroke:0.15px currentColor">24HLCU7103I71250006</div>
<div class="t" style="left:698.00px;top:393.50px;font-size:10.30px;color:#333;transform:scaleX(0.8734);transform-origin:0 0;-webkit-text-stroke:0.15px currentColor">TLLU5547810</div>
<div class="t" style="left:778.60px;top:393.50px;font-size:10.30px;color:#333;transform:scaleX(0.8840);transform-origin:0 0;-webkit-text-stroke:0.15px currentColor">44GP</div>
<div class="abs" style="left:73.50px;top:407.00px;width:857.50px;height:20.30px;background:#f2f2f2;border-top:1px solid #e0e0e0"></div>
<div class="abs" style="left:421.50px;top:407.00px;width:143.50px;height:20.30px;background:#4fa52b;border-top:1px solid #6bb34c"></div>
<div class="abs" style="left:91.50px;top:413.35px;width:10.50px;height:10.20px;background:#fff;border:1px solid #e2e2e2;border-radius:0.5px"></div>
<div class="t" style="left:134.91px;top:413.95px;font-size:10.30px;color:#333;transform:scaleX(0.9939);transform-origin:0 0;-webkit-text-stroke:0.15px currentColor">2:도착지</div>
<div class="t" style="left:213.94px;top:413.95px;font-size:10.30px;color:#333;transform:scaleX(1.0812);transform-origin:0 0;-webkit-text-stroke:0.15px currentColor">차량</div>
<div class="t" style="left:268.00px;top:413.95px;font-size:10.30px;color:#333;transform:scaleX(0.9091);transform-origin:0 0;-webkit-text-stroke:0.15px currentColor">4838</div>
<svg class="abs" style="left:328.80px;top:412.55px" width="10.5" height="10.5" viewBox="0 0 10.5 10.5"><circle cx="4.3" cy="4.3" r="3.3" fill="none" stroke="#222" stroke-width="1.7"/><path d="M6.7 6.7l3 3" stroke="#222" stroke-width="2" stroke-linecap="round"/></svg>
<div class="t" style="left:345.50px;top:413.95px;font-size:10.30px;color:#333;transform:scaleX(0.8984);transform-origin:0 0;-webkit-text-stroke:0.15px currentColor">부산99사4838</div>
<div class="t" style="left:423.42px;top:413.95px;font-size:10.30px;color:#fff;transform:scaleX(0.8910);transform-origin:0 0;-webkit-text-stroke:0.15px currentColor">보세운송차량입니다.</div>
<div class="t" style="left:571.91px;top:413.95px;font-size:10.30px;color:#333;transform:scaleX(0.8853);transform-origin:0 0;-webkit-text-stroke:0.15px currentColor">24HLCU7103I71250008</div>
<div class="t" style="left:698.00px;top:413.95px;font-size:10.30px;color:#333;transform:scaleX(0.8734);transform-origin:0 0;-webkit-text-stroke:0.15px currentColor">TLLU5547810</div>
<div class="t" style="left:778.60px;top:413.95px;font-size:10.30px;color:#333;transform:scaleX(0.8840);transform-origin:0 0;-webkit-text-stroke:0.15px currentColor">44GP</div>
<div class="abs" style="left:73.50px;top:427.30px;width:857.50px;height:20.00px;background:#ffffff;border-top:1px solid #e0e0e0"></div>
<div class="abs" style="left:421.50px;top:427.30px;width:143.50px;height:20.00px;background:#4fa52b;border-top:1px solid #6bb34c"></div>
<div class="abs" style="left:91.50px;top:433.50px;width:10.50px;height:10.20px;background:#fff;border:1px solid #e2e2e2;border-radius:0.5px"></div>
<div class="t" style="left:134.91px;top:434.10px;font-size:10.30px;color:#333;transform:scaleX(0.9939);transform-origin:0 0;-webkit-text-stroke:0.15px currentColor">2:도착지</div>
<div class="t" style="left:213.94px;top:434.10px;font-size:10.30px;color:#333;transform:scaleX(1.0812);transform-origin:0 0;-webkit-text-stroke:0.15px currentColor">차량</div>
<div class="t" style="left:268.00px;top:434.10px;font-size:10.30px;color:#333;transform:scaleX(0.9091);transform-origin:0 0;-webkit-text-stroke:0.15px currentColor">4838</div>
<svg class="abs" style="left:328.80px;top:432.70px" width="10.5" height="10.5" viewBox="0 0 10.5 10.5"><circle cx="4.3" cy="4.3" r="3.3" fill="none" stroke="#222" stroke-width="1.7"/><path d="M6.7 6.7l3 3" stroke="#222" stroke-width="2" stroke-linecap="round"/></svg>
<div class="t" style="left:345.50px;top:434.10px;font-size:10.30px;color:#333;transform:scaleX(0.8984);transform-origin:0 0;-webkit-text-stroke:0.15px currentColor">부산99사4838</div>
<div class="t" style="left:423.42px;top:434.10px;font-size:10.30px;color:#fff;transform:scaleX(0.8910);transform-origin:0 0;-webkit-text-stroke:0.15px currentColor">보세운송차량입니다.</div>
<div class="t" style="left:571.91px;top:434.10px;font-size:10.30px;color:#333;transform:scaleX(0.8935);transform-origin:0 0;-webkit-text-stroke:0.15px currentColor">24HLCU7103I71250001</div>
<div class="t" style="left:698.00px;top:434.10px;font-size:10.30px;color:#333;transform:scaleX(0.8734);transform-origin:0 0;-webkit-text-stroke:0.15px currentColor">TLLU5547810</div>
<div class="t" style="left:778.60px;top:434.10px;font-size:10.30px;color:#333;transform:scaleX(0.8840);transform-origin:0 0;-webkit-text-stroke:0.15px currentColor">44GP</div>
<div class="abs" style="left:73.50px;top:447.30px;width:857.50px;height:20.70px;background:#f2f2f2;border-top:1px solid #e0e0e0"></div>
<div class="abs" style="left:421.50px;top:447.30px;width:143.50px;height:20.70px;background:#4fa52b;border-top:1px solid #6bb34c"></div>
<div class="abs" style="left:91.50px;top:453.85px;width:10.50px;height:10.20px;background:#fff;border:1px solid #e2e2e2;border-radius:0.5px"></div>
<div class="t" style="left:134.91px;top:454.45px;font-size:10.30px;color:#333;transform:scaleX(0.9939);transform-origin:0 0;-webkit-text-stroke:0.15px currentColor">2:도착지</div>
<div class="t" style="left:213.94px;top:454.45px;font-size:10.30px;color:#333;transform:scaleX(1.0812);transform-origin:0 0;-webkit-text-stroke:0.15px currentColor">차량</div>
<div class="t" style="left:268.00px;top:454.45px;font-size:10.30px;color:#333;transform:scaleX(0.9091);transform-origin:0 0;-webkit-text-stroke:0.15px currentColor">4838</div>
<svg class="abs" style="left:328.80px;top:453.05px" width="10.5" height="10.5" viewBox="0 0 10.5 10.5"><circle cx="4.3" cy="4.3" r="3.3" fill="none" stroke="#222" stroke-width="1.7"/><path d="M6.7 6.7l3 3" stroke="#222" stroke-width="2" stroke-linecap="round"/></svg>
<div class="t" style="left:345.50px;top:454.45px;font-size:10.30px;color:#333;transform:scaleX(0.8984);transform-origin:0 0;-webkit-text-stroke:0.15px currentColor">부산99사4838</div>
<div class="t" style="left:423.42px;top:454.45px;font-size:10.30px;color:#fff;transform:scaleX(0.8910);transform-origin:0 0;-webkit-text-stroke:0.15px currentColor">보세운송차량입니다.</div>
<div class="t" style="left:571.91px;top:454.45px;font-size:10.30px;color:#333;transform:scaleX(0.8853);transform-origin:0 0;-webkit-text-stroke:0.15px currentColor">24HLCU7103I71250010</div>
<div class="t" style="left:698.00px;top:454.45px;font-size:10.30px;color:#333;transform:scaleX(0.8734);transform-origin:0 0;-webkit-text-stroke:0.15px currentColor">TLLU5547810</div>
<div class="t" style="left:778.60px;top:454.45px;font-size:10.30px;color:#333;transform:scaleX(0.8840);transform-origin:0 0;-webkit-text-stroke:0.15px currentColor">44GP</div>
<div class="abs" style="left:73.50px;top:468.00px;width:857.50px;height:20.30px;background:#ffffff;border-top:1px solid #e0e0e0"></div>
<div class="abs" style="left:421.50px;top:468.00px;width:143.50px;height:20.30px;background:#4fa52b;border-top:1px solid #6bb34c"></div>
<div class="abs" style="left:91.50px;top:474.35px;width:10.50px;height:10.20px;background:#fff;border:1px solid #e2e2e2;border-radius:0.5px"></div>
<div class="t" style="left:134.91px;top:474.95px;font-size:10.30px;color:#333;transform:scaleX(0.9939);transform-origin:0 0;-webkit-text-stroke:0.15px currentColor">2:도착지</div>
<div class="t" style="left:213.94px;top:474.95px;font-size:10.30px;color:#333;transform:scaleX(1.0812);transform-origin:0 0;-webkit-text-stroke:0.15px currentColor">차량</div>
<div class="t" style="left:268.00px;top:474.95px;font-size:10.30px;color:#333;transform:scaleX(0.9091);transform-origin:0 0;-webkit-text-stroke:0.15px currentColor">4838</div>
<svg class="abs" style="left:328.80px;top:473.55px" width="10.5" height="10.5" viewBox="0 0 10.5 10.5"><circle cx="4.3" cy="4.3" r="3.3" fill="none" stroke="#222" stroke-width="1.7"/><path d="M6.7 6.7l3 3" stroke="#222" stroke-width="2" stroke-linecap="round"/></svg>
<div class="t" style="left:345.50px;top:474.95px;font-size:10.30px;color:#333;transform:scaleX(0.8984);transform-origin:0 0;-webkit-text-stroke:0.15px currentColor">부산99사4838</div>
<div class="t" style="left:423.42px;top:474.95px;font-size:10.30px;color:#fff;transform:scaleX(0.8910);transform-origin:0 0;-webkit-text-stroke:0.15px currentColor">보세운송차량입니다.</div>
<div class="t" style="left:571.91px;top:474.95px;font-size:10.30px;color:#333;transform:scaleX(0.8853);transform-origin:0 0;-webkit-text-stroke:0.15px currentColor">24HLCU7103I71250003</div>
<div class="t" style="left:698.00px;top:474.95px;font-size:10.30px;color:#333;transform:scaleX(0.8734);transform-origin:0 0;-webkit-text-stroke:0.15px currentColor">TLLU5547810</div>
<div class="t" style="left:778.60px;top:474.95px;font-size:10.30px;color:#333;transform:scaleX(0.8840);transform-origin:0 0;-webkit-text-stroke:0.15px currentColor">44GP</div>
<div class="abs" style="left:73.50px;top:488.30px;width:857.50px;height:20.10px;background:#f2f2f2;border-top:1px solid #e0e0e0"></div>
<div class="abs" style="left:421.50px;top:488.30px;width:143.50px;height:20.10px;background:#4fa52b;border-top:1px solid #6bb34c"></div>
<div class="abs" style="left:91.50px;top:494.55px;width:10.50px;height:10.20px;background:#fff;border:1px solid #e2e2e2;border-radius:0.5px"></div>
<div class="t" style="left:134.91px;top:495.15px;font-size:10.30px;color:#333;transform:scaleX(0.9939);transform-origin:0 0;-webkit-text-stroke:0.15px currentColor">2:도착지</div>
<div class="t" style="left:213.94px;top:495.15px;font-size:10.30px;color:#333;transform:scaleX(1.0812);transform-origin:0 0;-webkit-text-stroke:0.15px currentColor">차량</div>
<div class="t" style="left:268.00px;top:495.15px;font-size:10.30px;color:#333;transform:scaleX(0.9091);transform-origin:0 0;-webkit-text-stroke:0.15px currentColor">4838</div>
<svg class="abs" style="left:328.80px;top:493.75px" width="10.5" height="10.5" viewBox="0 0 10.5 10.5"><circle cx="4.3" cy="4.3" r="3.3" fill="none" stroke="#222" stroke-width="1.7"/><path d="M6.7 6.7l3 3" stroke="#222" stroke-width="2" stroke-linecap="round"/></svg>
<div class="t" style="left:345.50px;top:495.15px;font-size:10.30px;color:#333;transform:scaleX(0.8984);transform-origin:0 0;-webkit-text-stroke:0.15px currentColor">부산99사4838</div>
<div class="t" style="left:423.42px;top:495.15px;font-size:10.30px;color:#fff;transform:scaleX(0.8910);transform-origin:0 0;-webkit-text-stroke:0.15px currentColor">보세운송차량입니다.</div>
<div class="t" style="left:571.91px;top:495.15px;font-size:10.30px;color:#333;transform:scaleX(0.8853);transform-origin:0 0;-webkit-text-stroke:0.15px currentColor">24HLCU7103I71250005</div>
<div class="t" style="left:698.00px;top:495.15px;font-size:10.30px;color:#333;transform:scaleX(0.8734);transform-origin:0 0;-webkit-text-stroke:0.15px currentColor">TLLU5547810</div>
<div class="t" style="left:778.60px;top:495.15px;font-size:10.30px;color:#333;transform:scaleX(0.8840);transform-origin:0 0;-webkit-text-stroke:0.15px currentColor">44GP</div>
<div class="abs" style="left:73.50px;top:508.40px;width:857.50px;height:20.20px;background:#ffffff;border-top:1px solid #e0e0e0"></div>
<div class="abs" style="left:421.50px;top:508.40px;width:143.50px;height:20.20px;background:#4fa52b;border-top:1px solid #6bb34c"></div>
<div class="abs" style="left:91.50px;top:514.70px;width:10.50px;height:10.20px;background:#fff;border:1px solid #e2e2e2;border-radius:0.5px"></div>
<div class="t" style="left:134.91px;top:515.30px;font-size:10.30px;color:#333;transform:scaleX(0.9939);transform-origin:0 0;-webkit-text-stroke:0.15px currentColor">2:도착지</div>
<div class="t" style="left:213.94px;top:515.30px;font-size:10.30px;color:#333;transform:scaleX(1.0812);transform-origin:0 0;-webkit-text-stroke:0.15px currentColor">차량</div>
<div class="t" style="left:268.00px;top:515.30px;font-size:10.30px;color:#333;transform:scaleX(0.9091);transform-origin:0 0;-webkit-text-stroke:0.15px currentColor">4838</div>
<svg class="abs" style="left:328.80px;top:513.90px" width="10.5" height="10.5" viewBox="0 0 10.5 10.5"><circle cx="4.3" cy="4.3" r="3.3" fill="none" stroke="#222" stroke-width="1.7"/><path d="M6.7 6.7l3 3" stroke="#222" stroke-width="2" stroke-linecap="round"/></svg>
<div class="t" style="left:345.50px;top:515.30px;font-size:10.30px;color:#333;transform:scaleX(0.8984);transform-origin:0 0;-webkit-text-stroke:0.15px currentColor">부산99사4838</div>
<div class="t" style="left:423.42px;top:515.30px;font-size:10.30px;color:#fff;transform:scaleX(0.8910);transform-origin:0 0;-webkit-text-stroke:0.15px currentColor">보세운송차량입니다.</div>
<div class="t" style="left:571.91px;top:515.30px;font-size:10.30px;color:#333;transform:scaleX(0.8853);transform-origin:0 0;-webkit-text-stroke:0.15px currentColor">24HLCU7103I71250007</div>
<div class="t" style="left:698.00px;top:515.30px;font-size:10.30px;color:#333;transform:scaleX(0.8734);transform-origin:0 0;-webkit-text-stroke:0.15px currentColor">TLLU5547810</div>
<div class="t" style="left:778.60px;top:515.30px;font-size:10.30px;color:#333;transform:scaleX(0.8840);transform-origin:0 0;-webkit-text-stroke:0.15px currentColor">44GP</div>
<div class="abs" style="left:120.00px;top:282.00px;width:1.00px;height:245.00px;background:rgba(0,0,0,.09)"></div>
<div class="abs" style="left:120.00px;top:305.00px;width:1.00px;height:20.80px;background:#a9bff0"></div>
<div class="abs" style="left:185.50px;top:282.00px;width:1.00px;height:245.00px;background:rgba(0,0,0,.09)"></div>
<div class="abs" style="left:185.50px;top:305.00px;width:1.00px;height:20.80px;background:#a9bff0"></div>
<div class="abs" style="left:264.50px;top:282.00px;width:1.00px;height:245.00px;background:rgba(0,0,0,.09)"></div>
<div class="abs" style="left:264.50px;top:305.00px;width:1.00px;height:20.80px;background:#a9bff0"></div>
<div class="abs" style="left:342.00px;top:282.00px;width:1.00px;height:245.00px;background:rgba(0,0,0,.09)"></div>
<div class="abs" style="left:342.00px;top:305.00px;width:1.00px;height:20.80px;background:#a9bff0"></div>
<div class="abs" style="left:421.50px;top:282.00px;width:1.00px;height:245.00px;background:rgba(0,0,0,.09)"></div>
<div class="abs" style="left:421.50px;top:305.00px;width:1.00px;height:20.80px;background:#a9bff0"></div>
<div class="abs" style="left:565.00px;top:282.00px;width:1.00px;height:245.00px;background:rgba(0,0,0,.09)"></div>
<div class="abs" style="left:565.00px;top:305.00px;width:1.00px;height:20.80px;background:#a9bff0"></div>
<div class="abs" style="left:676.50px;top:282.00px;width:1.00px;height:245.00px;background:rgba(0,0,0,.09)"></div>
<div class="abs" style="left:676.50px;top:305.00px;width:1.00px;height:20.80px;background:#a9bff0"></div>
<div class="abs" style="left:775.00px;top:282.00px;width:1.00px;height:245.00px;background:rgba(0,0,0,.09)"></div>
<div class="abs" style="left:775.00px;top:305.00px;width:1.00px;height:20.80px;background:#a9bff0"></div>
<div class="abs" style="left:840.50px;top:282.00px;width:1.00px;height:245.00px;background:rgba(0,0,0,.09)"></div>
<div class="abs" style="left:840.50px;top:305.00px;width:1.00px;height:20.80px;background:#a9bff0"></div>
<div class="abs" style="left:92.00px;top:289.00px;width:10.00px;height:10.00px;background:#fff;border:1px solid #d6d6d6"></div>
<div class="t" style="left:123.96px;top:289.80px;font-size:10.30px;color:#333;transform:scaleX(0.9204);transform-origin:0 0;-webkit-text-stroke:0.15px currentColor">도착지 구분</div>
<div class="t" style="left:175.50px;top:286.50px;font-size:9px;color:#e02020;font-weight:bold;-webkit-text-stroke:0.08px currentColor">*</div>
<div class="t" style="left:192.73px;top:289.80px;font-size:10.30px;color:#333;transform:scaleX(0.8717);transform-origin:0 0;-webkit-text-stroke:0.15px currentColor">운송수단 종류</div>
<div class="t" style="left:252.00px;top:286.50px;font-size:9px;color:#e02020;font-weight:bold;-webkit-text-stroke:0.08px currentColor">*</div>
<div class="t" style="left:275.40px;top:289.80px;font-size:10.30px;color:#333;transform:scaleX(0.9000);transform-origin:0 0;-webkit-text-stroke:0.15px currentColor">운송수단 코드</div>
<div class="t" style="left:349.80px;top:289.80px;font-size:10.30px;color:#333;transform:scaleX(0.9000);transform-origin:0 0;-webkit-text-stroke:0.15px currentColor">운송수단 번호</div>
<div class="t" style="left:409.50px;top:286.50px;font-size:9px;color:#e02020;font-weight:bold;-webkit-text-stroke:0.08px currentColor">*</div>
<div class="t" style="left:455.49px;top:289.80px;font-size:10.30px;color:#333;transform:scaleX(0.9063);transform-origin:0 0;-webkit-text-stroke:0.15px currentColor">보세운송차량 검증</div>
<div class="t" style="left:594.60px;top:289.80px;font-size:10.30px;color:#333;transform:scaleX(0.8982);transform-origin:0 0;-webkit-text-stroke:0.15px currentColor">화물관리번호</div>
<div class="t" style="left:696.87px;top:289.80px;font-size:10.30px;color:#333;transform:scaleX(0.9136);transform-origin:0 0;-webkit-text-stroke:0.15px currentColor">컨테이너 번호</div>
<div class="t" style="left:778.43px;top:289.80px;font-size:10.30px;color:#333;transform:scaleX(0.9345);transform-origin:0 0;-webkit-text-stroke:0.15px currentColor">컨테이너 규격</div>
<div class="abs" style="left:259.00px;top:403.00px;width:150.00px;height:31.00px;background:rgba(240,120,110,.10);border-radius:16px"></div>
<div class="abs" style="left:701.00px;top:403.00px;width:154.00px;height:31.00px;background:rgba(240,120,110,.10);border-radius:16px"></div>
</div>
<div class="abs" style="left:962.00px;top:200.50px;width:269.00px;height:385.50px;background:#fff;border:1px solid #c4c4c4;border-top-color:#d9d9d9;border-radius:17px 17px 0 0;box-shadow:8px 0 14px rgba(0,0,0,.07)"></div>
<svg class="abs" style="left:971.00px;top:210.00px" width="12" height="18" viewBox="0 0 12 18"><path d="M10 1.5L2 9l8 7.5" fill="none" stroke="#222" stroke-width="1.6"/></svg>
<div class="t" style="left:1045.90px;top:211.72px;font-size:13.18px;color:#1a1a1a;-webkit-text-stroke:0.6px #1a1a1a;transform:scaleX(0.9725);transform-origin:0 0">배차예정내역신고</div>
<svg class="abs" style="left:1184.00px;top:210.00px" width="17" height="17" viewBox="0 0 17 17"><path d="M1.5 8.5L8.5 1.5l7 7M3.5 6.8v9h3.5v-5h3v5h3.5v-9" fill="none" stroke="#444" stroke-width="1.2"/></svg>
<svg class="abs" style="left:1204.00px;top:209.00px" width="20" height="18" viewBox="0 0 20 18"><path d="M5 5.5h3.5l6-3.5v13l-6-3.5H5a3 3 0 0 1 0-6z" fill="none" stroke="#5a5a5a" stroke-width="1"/><path d="M14.5 2v13" stroke="#5a5a5a" stroke-width="1.6"/><path d="M6.5 11.5v4.5h1.8v-4.5" fill="none" stroke="#5a5a5a" stroke-width="1"/><path d="M15.5 7a1.6 1.6 0 0 1 0 3.2" fill="none" stroke="#5a5a5a" stroke-width="1"/></svg>
<div class="abs" style="left:1197.00px;top:200.00px;width:36.00px;height:36.00px;background:#a5d490;border-radius:50%;mix-blend-mode:multiply"></div>
<div class="abs" style="left:963.50px;top:236.00px;width:266.00px;height:41.50px;background:#0f47a1"></div>
<div class="abs" style="left:1090.50px;top:275.50px;width:139.00px;height:2.00px;background:#d5dcea"></div>
<svg class="abs" style="left:1019.00px;top:239.00px" width="16" height="17" viewBox="0 0 16 17"><path d="M3 3.5h6.5L13 7v8.5H3z" fill="none" stroke="#9fb4e0" stroke-width="1.2"/><path d="M5 1.5h5.5l3.5 3.5v9" fill="none" stroke="#9fb4e0" stroke-width="1"/><path d="M5.5 10l1.8 1.8 3-3" fill="none" stroke="#9fb4e0" stroke-width="1.2"/></svg>
<div class="t" style="left:1005.99px;top:262.42px;font-size:8.78px;color:#a9bde6;transform:scaleX(1.1061);transform-origin:0 0;-webkit-text-stroke:0.15px currentColor">신고 정보</div>
<svg class="abs" style="left:1150.00px;top:240.00px" width="20" height="15" viewBox="0 0 20 15"><path d="M1 2h10v9.5H1z" fill="none" stroke="#fff" stroke-width="1.3"/><path d="M11 5h4l3.5 3.5v3H11z" fill="none" stroke="#fff" stroke-width="1.3"/><circle cx="4" cy="12.5" r="1.8" fill="#0f47a1" stroke="#fff" stroke-width="1.2"/><circle cx="15" cy="12.5" r="1.8" fill="#0f47a1" stroke="#fff" stroke-width="1.2"/><path d="M5 2v3h2V2" fill="#fff"/></svg>
<div class="abs" style="left:1170.00px;top:240.00px;width:17.00px;height:11.00px;background:#e53935;border-radius:2px"></div>
<div class="t" style="left:1173.67px;top:241.76px;font-size:8.72px;color:#fff;transform:scaleX(1.1286);transform-origin:0 0;-webkit-text-stroke:0.15px currentColor">11</div>
<div class="t" style="left:1143.20px;top:262.42px;font-size:8.78px;color:#fff;-webkit-text-stroke:0.3px #fff;transform:scaleX(0.9912);transform-origin:0 0">배차내역</div>
<div class="abs" style="left:978.00px;top:292.50px;width:240.50px;height:35.00px;background:#d6ecd0;border-radius:3px"></div>
<div class="abs" style="left:975.00px;top:289.50px;width:241.00px;height:35.50px;background:#1b6c1b;border-radius:3px;border:1px solid #135413"></div>
<div class="t" style="left:990.00px;top:302.58px;font-size:10.52px;color:#fff;font-weight:bold;transform:scaleX(0.9162);transform-origin:0 0;-webkit-text-stroke:0.08px currentColor">배차내역 추가</div>
<svg class="abs" style="left:1184.00px;top:298.00px" width="18" height="18" viewBox="0 0 18 18"><circle cx="9" cy="9" r="8.8" fill="#fff"/><path d="M9 4.8v8.4M4.8 9h8.4" stroke="#1b6c1b" stroke-width="1.8"/></svg>
<div class="abs" style="left:975.50px;top:339.00px;width:239.50px;height:235.00px;background:#fff;border:1px solid #ebebeb;border-radius:7px;box-shadow:0 1px 3px rgba(0,0,0,.06)"></div>
<div class="t" style="left:987.30px;top:357.82px;font-size:14.07px;color:#111;font-weight:bold;transform:scaleX(1.0326);transform-origin:0 0;-webkit-text-stroke:0.30px currentColor">TLLU5547810</div>
<div class="abs" style="left:1176.50px;top:350.00px;width:28.50px;height:28.50px;background:#798e9b;border-radius:50%;box-shadow:0 2px 2px rgba(0,0,0,.25)"></div>
<svg class="abs" style="left:1184.00px;top:356.00px" width="14" height="16" viewBox="0 0 14 16"><rect x="2" y="1.5" width="10" height="2" rx="0.6" fill="#fff"/><path d="M3 4.5h8l-.7 9.5H3.7z" fill="#fff"/></svg>
<div class="abs" style="left:986.00px;top:385.00px;width:219.00px;height:1.00px;background:#e6e6e6"></div>
<div class="t" style="left:985.16px;top:392.30px;font-size:9.60px;color:#4a4a4a;-webkit-text-stroke:0.25px #4a4a4a;transform:scaleX(0.9217);transform-origin:0 0">도착지구분</div>
<div class="t" style="left:986.10px;top:410.05px;font-size:9.60px;color:#4a4a4a;-webkit-text-stroke:0.25px #4a4a4a;transform:scaleX(0.9000);transform-origin:0 0">운송수단 종류</div>
<div class="t" style="left:986.10px;top:427.80px;font-size:9.60px;color:#4a4a4a;-webkit-text-stroke:0.25px #4a4a4a;transform:scaleX(0.9000);transform-origin:0 0">운송수단 코드</div>
<div class="t" style="left:986.10px;top:445.55px;font-size:9.60px;color:#4a4a4a;-webkit-text-stroke:0.25px #4a4a4a;transform:scaleX(0.9000);transform-origin:0 0">운송수단 번호</div>
<div class="t" style="left:986.10px;top:463.30px;font-size:9.60px;color:#4a4a4a;-webkit-text-stroke:0.25px #4a4a4a;transform:scaleX(0.9035);transform-origin:0 0">화물관리번호</div>
<div class="t" style="left:986.10px;top:481.05px;font-size:9.60px;color:#4a4a4a;-webkit-text-stroke:0.25px #4a4a4a;transform:scaleX(0.9000);transform-origin:0 0">컨테이너 번호</div>
<div class="t" style="left:986.10px;top:498.80px;font-size:9.60px;color:#4a4a4a;-webkit-text-stroke:0.25px #4a4a4a;transform:scaleX(0.9000);transform-origin:0 0">컨테이너 규격</div>
<div class="t" style="left:986.04px;top:516.55px;font-size:9.60px;color:#4a4a4a;-webkit-text-stroke:0.25px #4a4a4a;transform:scaleX(0.9588);transform-origin:0 0">비고</div>
<div class="t" style="left:1074.50px;top:392.40px;font-size:9.60px;color:#111;font-weight:bold;-webkit-text-stroke:0.1px #111;transform:scaleX(0.8816);transform-origin:0 0"><span style="font-size:1.12em">2:</span>도착지</div>
<div class="t" style="left:1074.50px;top:410.15px;font-size:9.60px;color:#111;font-weight:bold;-webkit-text-stroke:0.1px #111;transform:scaleX(0.8684);transform-origin:0 0">차량</div>
<div class="t" style="left:1074.50px;top:428.90px;font-size:10.30px;color:#111;font-weight:bold;-webkit-text-stroke:0.05px #111;transform:scaleX(0.9636);transform-origin:0 0">4838</div>
<div class="t" style="left:1074.50px;top:445.65px;font-size:9.60px;color:#111;font-weight:bold;-webkit-text-stroke:0.1px #111;transform:scaleX(0.9108);transform-origin:0 0">부산<span style="font-size:1.12em">99</span>사<span style="font-size:1.12em">4838</span></div>
<div class="t" style="left:1074.50px;top:464.40px;font-size:10.30px;color:#111;font-weight:bold;-webkit-text-stroke:0.05px #111;transform:scaleX(0.9655);transform-origin:0 0">24HLCU7103I71250009</div>
<div class="t" style="left:1074.50px;top:482.15px;font-size:10.30px;color:#111;font-weight:bold;-webkit-text-stroke:0.05px #111;transform:scaleX(0.9569);transform-origin:0 0">TLLU5547810</div>
<div class="t" style="left:1074.50px;top:499.90px;font-size:10.30px;color:#111;font-weight:bold;-webkit-text-stroke:0.05px #111;transform:scaleX(0.9480);transform-origin:0 0">44GP</div>
<div class="abs" style="left:989.00px;top:538.00px;width:218.00px;height:29.00px;background:#dde6fb;border-radius:3px"></div>
<div class="abs" style="left:986.00px;top:535.00px;width:219.00px;height:29.00px;background:#1c4a8b;border-radius:3px"></div>
<div class="t" style="left:1069.86px;top:542.51px;font-size:14.45px;color:#fff;-webkit-text-stroke:0.35px #fff;transform:scaleX(0.9404);transform-origin:0 0">수정하기</div>
<div class="abs" style="left:1123.00px;top:27.00px;width:112.00px;height:156.00px;background:#fff;border:2px solid #0b1a48"></div>
<div class="abs" style="left:1129.00px;top:36.00px;width:38.00px;height:1.20px;background:repeating-linear-gradient(90deg,#a0a0a0 0 1.6px,transparent 1.6px 2.4px,#a0a0a0 2.4px 3.4px,transparent 3.4px 4.6px)"></div>
<div class="abs" style="left:1157.00px;top:42.30px;width:44.00px;height:1.60px;background:repeating-linear-gradient(90deg,#999 0 1.6px,transparent 1.6px 2.4px,#999 2.4px 3.4px,transparent 3.4px 4.6px)"></div>
<div class="abs" style="left:1130.00px;top:48.50px;width:10.00px;height:1.20px;background:repeating-linear-gradient(90deg,#b0b0b0 0 1.6px,transparent 1.6px 2.4px,#b0b0b0 2.4px 3.4px,transparent 3.4px 4.6px)"></div>
<div class="abs" style="left:1127.00px;top:51.00px;width:36.00px;height:0.80px;background:#aaa"></div>
<div class="abs" style="left:1133.00px;top:49.60px;width:4.00px;height:1.10px;background:repeating-linear-gradient(90deg,#b0b0b0 0 1.6px,transparent 1.6px 2.4px,#b0b0b0 2.4px 3.4px,transparent 3.4px 4.6px)"></div>
<div class="abs" style="left:1140.00px;top:49.60px;width:15.00px;height:1.10px;background:repeating-linear-gradient(90deg,#a8a8a8 0 1.6px,transparent 1.6px 2.4px,#a8a8a8 2.4px 3.4px,transparent 3.4px 4.6px)"></div>
<div class="abs" style="left:1127.00px;top:54.50px;width:36.00px;height:0.80px;background:#aaa"></div>
<div class="abs" style="left:1133.00px;top:53.00px;width:4.00px;height:1.10px;background:repeating-linear-gradient(90deg,#b0b0b0 0 1.6px,transparent 1.6px 2.4px,#b0b0b0 2.4px 3.4px,transparent 3.4px 4.6px)"></div>
<div class="abs" style="left:1140.00px;top:53.00px;width:25.00px;height:1.10px;background:repeating-linear-gradient(90deg,#aaa 0 1.6px,transparent 1.6px 2.4px,#aaa 2.4px 3.4px,transparent 3.4px 4.6px)"></div>
<div class="abs" style="left:1127.00px;top:58.00px;width:36.00px;height:0.80px;background:#aaa"></div>
<div class="abs" style="left:1133.00px;top:56.50px;width:4.00px;height:1.10px;background:repeating-linear-gradient(90deg,#b0b0b0 0 1.6px,transparent 1.6px 2.4px,#b0b0b0 2.4px 3.4px,transparent 3.4px 4.6px)"></div>
<div class="abs" style="left:1140.00px;top:56.50px;width:8.00px;height:1.10px;background:repeating-linear-gradient(90deg,#a8a8a8 0 1.6px,transparent 1.6px 2.4px,#a8a8a8 2.4px 3.4px,transparent 3.4px 4.6px)"></div>
<div class="abs" style="left:1166.00px;top:48.50px;width:20.00px;height:1.20px;background:repeating-linear-gradient(90deg,#b0b0b0 0 1.6px,transparent 1.6px 2.4px,#b0b0b0 2.4px 3.4px,transparent 3.4px 4.6px)"></div>
<div class="abs" style="left:1166.00px;top:50.50px;width:20.00px;height:3.00px;border:0.8px solid #b0b0b0"></div>
<div class="abs" style="left:1175.00px;top:51.50px;width:8.00px;height:1.00px;background:repeating-linear-gradient(90deg,#b0b0b0 0 1.6px,transparent 1.6px 2.4px,#b0b0b0 2.4px 3.4px,transparent 3.4px 4.6px)"></div>
<div class="abs" style="left:1166.00px;top:54.00px;width:20.00px;height:3.00px;border:0.8px solid #b0b0b0"></div>
<div class="abs" style="left:1167.00px;top:55.00px;width:18.00px;height:1.00px;background:repeating-linear-gradient(90deg,#9a9a9a 0 1.6px,transparent 1.6px 2.4px,#9a9a9a 2.4px 3.4px,transparent 3.4px 4.6px)"></div>
<div class="abs" style="left:1166.00px;top:57.50px;width:20.00px;height:3.00px;border:0.8px solid #b0b0b0"></div>
<div class="abs" style="left:1172.00px;top:58.50px;width:10.00px;height:1.00px;background:repeating-linear-gradient(90deg,#b0b0b0 0 1.6px,transparent 1.6px 2.4px,#b0b0b0 2.4px 3.4px,transparent 3.4px 4.6px)"></div>
<div class="abs" style="left:1188.00px;top:47.50px;width:41.00px;height:13.00px;border:0.8px solid #b0b0b0"></div>
<div class="abs" style="left:1188.00px;top:54.00px;width:41.00px;height:0.60px;background:#bbb"></div>
<div class="abs" style="left:1189.00px;top:48.50px;width:18.00px;height:1.10px;background:repeating-linear-gradient(90deg,#b0b0b0 0 1.6px,transparent 1.6px 2.4px,#b0b0b0 2.4px 3.4px,transparent 3.4px 4.6px)"></div>
<div class="abs" style="left:1200.00px;top:51.50px;width:21.00px;height:1.10px;background:repeating-linear-gradient(90deg,#a8a8a8 0 1.6px,transparent 1.6px 2.4px,#a8a8a8 2.4px 3.4px,transparent 3.4px 4.6px)"></div>
<div class="abs" style="left:1189.00px;top:55.00px;width:8.00px;height:1.10px;background:repeating-linear-gradient(90deg,#b0b0b0 0 1.6px,transparent 1.6px 2.4px,#b0b0b0 2.4px 3.4px,transparent 3.4px 4.6px)"></div>
<div class="abs" style="left:1210.00px;top:57.80px;width:8.00px;height:1.10px;background:repeating-linear-gradient(90deg,#a8a8a8 0 1.6px,transparent 1.6px 2.4px,#a8a8a8 2.4px 3.4px,transparent 3.4px 4.6px)"></div>
<div class="abs" style="left:1128.00px;top:61.00px;width:101.50px;height:117.50px;border:0.8px solid #c8c8c8"></div>
<div class="abs" style="left:1128.00px;top:68.00px;width:101.50px;height:0.80px;background:#c4c4c4"></div>
<div class="abs" style="left:1128.00px;top:71.00px;width:101.50px;height:0.80px;background:#c4c4c4"></div>
<div class="abs" style="left:1128.00px;top:160.50px;width:101.50px;height:0.80px;background:#c4c4c4"></div>
<div class="abs" style="left:1148.50px;top:61.00px;width:1.20px;height:99.50px;background:#cfcfcf"></div>
<div class="abs" style="left:1207.50px;top:61.00px;width:1.20px;height:99.50px;background:#cfcfcf"></div>
<div class="abs" style="left:1133.00px;top:63.00px;width:11.00px;height:1.10px;background:repeating-linear-gradient(90deg,#b0b0b0 0 1.6px,transparent 1.6px 2.4px,#b0b0b0 2.4px 3.4px,transparent 3.4px 4.6px)"></div>
<div class="abs" style="left:1165.00px;top:63.00px;width:25.00px;height:1.10px;background:repeating-linear-gradient(90deg,#b0b0b0 0 1.6px,transparent 1.6px 2.4px,#b0b0b0 2.4px 3.4px,transparent 3.4px 4.6px)"></div>
<div class="abs" style="left:1212.00px;top:63.00px;width:10.00px;height:1.10px;background:repeating-linear-gradient(90deg,#b0b0b0 0 1.6px,transparent 1.6px 2.4px,#b0b0b0 2.4px 3.4px,transparent 3.4px 4.6px)"></div>
<div class="abs" style="left:1175.00px;top:66.00px;width:23.00px;height:1.10px;background:repeating-linear-gradient(90deg,#a8a8a8 0 1.6px,transparent 1.6px 2.4px,#a8a8a8 2.4px 3.4px,transparent 3.4px 4.6px)"></div>
<div class="abs" style="left:1135.00px;top:69.00px;width:11.00px;height:1.10px;background:repeating-linear-gradient(90deg,#b0b0b0 0 1.6px,transparent 1.6px 2.4px,#b0b0b0 2.4px 3.4px,transparent 3.4px 4.6px)"></div>
<div class="abs" style="left:1172.00px;top:69.00px;width:20.00px;height:1.10px;background:repeating-linear-gradient(90deg,#a8a8a8 0 1.6px,transparent 1.6px 2.4px,#a8a8a8 2.4px 3.4px,transparent 3.4px 4.6px)"></div>
<div class="abs" style="left:1133.00px;top:73.00px;width:14.00px;height:1.10px;background:repeating-linear-gradient(90deg,#b0b0b0 0 1.6px,transparent 1.6px 2.4px,#b0b0b0 2.4px 3.4px,transparent 3.4px 4.6px)"></div>
<div class="abs" style="left:1134.00px;top:162.30px;width:94.00px;height:1.30px;background:repeating-linear-gradient(90deg,#a8a8a8 0 1.6px,transparent 1.6px 2.4px,#a8a8a8 2.4px 3.4px,transparent 3.4px 4.6px)"></div>
<div class="abs" style="left:1134.00px;top:165.00px;width:56.00px;height:1.30px;background:repeating-linear-gradient(90deg,#a8a8a8 0 1.6px,transparent 1.6px 2.4px,#a8a8a8 2.4px 3.4px,transparent 3.4px 4.6px)"></div>
<div class="abs" style="left:1190.00px;top:168.50px;width:16.00px;height:1.10px;background:repeating-linear-gradient(90deg,#9a9a9a 0 1.6px,transparent 1.6px 2.4px,#9a9a9a 2.4px 3.4px,transparent 3.4px 4.6px)"></div>
<div class="abs" style="left:1180.00px;top:171.50px;width:11.00px;height:1.10px;background:repeating-linear-gradient(90deg,#999 0 1.6px,transparent 1.6px 2.4px,#999 2.4px 3.4px,transparent 3.4px 4.6px)"></div>
<div class="abs" style="left:1200.00px;top:171.50px;width:22.00px;height:1.10px;background:repeating-linear-gradient(90deg,#999 0 1.6px,transparent 1.6px 2.4px,#999 2.4px 3.4px,transparent 3.4px 4.6px)"></div>
<div class="abs" style="left:1168.00px;top:176.00px;width:22.00px;height:1.20px;background:repeating-linear-gradient(90deg,#a8a8a8 0 1.6px,transparent 1.6px 2.4px,#a8a8a8 2.4px 3.4px,transparent 3.4px 4.6px)"></div>
<div class="t" style="left:1146px;top:112px;font-size:14.6px;color:#e8403a;-webkit-text-stroke:0.3px #e8403a;transform:rotate(-20deg);transform-origin:0 100%;">출력증 발급</div>
</div>
</body></html>
